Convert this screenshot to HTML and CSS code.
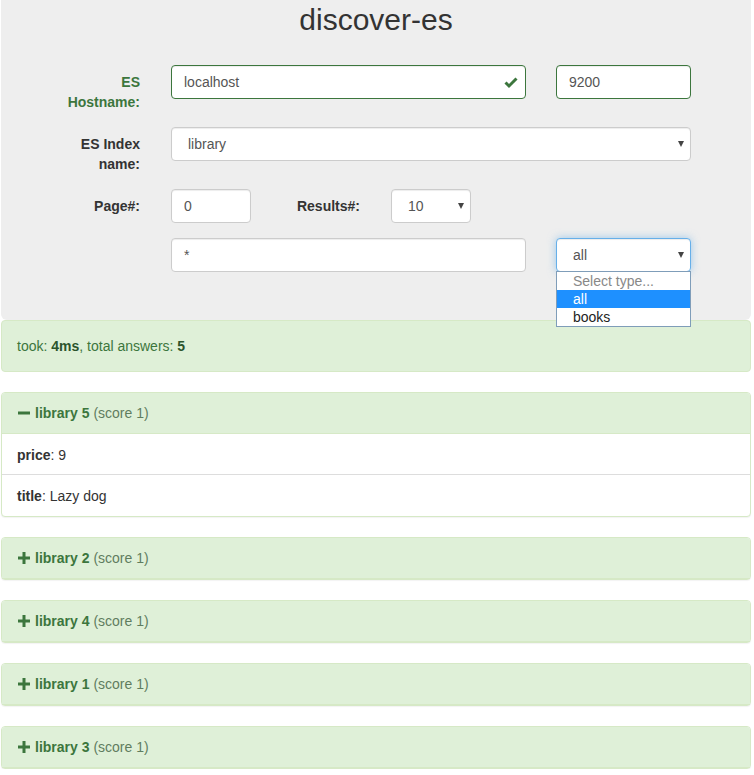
FILE: index.html
```html
<!DOCTYPE html>
<html lang="en">
<head>
<meta charset="utf-8">
<title>discover-es</title>
<link rel="stylesheet" href="styles.css">
</head>
<body>
<div class="page">
  <div class="jumbotron">
    <h2 class="title">discover-es</h2>
    <form class="form">
      <div class="row row-tall">
        <label class="lbl lbl-success">ES Hostname:</label>
        <div class="field w-host">
          <input class="input input-success" value="localhost">
          <svg class="check" width="14" height="12" viewBox="0 0 14 12"><polyline points="1.5,5.5 5,9 12.5,1.5" fill="none" stroke="#3c763d" stroke-width="3"/></svg>
        </div>
        <div class="field w-port gap30">
          <input class="input input-success" value="9200">
        </div>
      </div>
      <div class="row row-tall">
        <label class="lbl">ES Index name:</label>
        <div class="field w-full select-wrap">
          <select class="select"><option>library</option></select>
        </div>
      </div>
      <div class="row">
        <label class="lbl">Page#:</label>
        <div class="field w-small">
          <input class="input" value="0">
        </div>
        <label class="lbl lbl-results">Results#:</label>
        <div class="field w-small select-wrap">
          <select class="select"><option>10</option></select>
        </div>
      </div>
      <div class="row row-last">
        <div class="spacer"></div>
        <div class="field w-host">
          <input class="input" value="*">
        </div>
        <div class="field w-port gap30 select-wrap">
          <select class="select select-focus"><option>all</option></select>
          <ul class="dropdown">
            <li class="opt opt-muted">Select type...</li>
            <li class="opt opt-active">all</li>
            <li class="opt">books</li>
          </ul>
        </div>
      </div>
    </form>
  </div>

  <div class="alert">took: <b>4ms</b>, total answers: <b>5</b></div>

  <div class="panel">
    <div class="panel-heading">
      <svg class="pm" width="12" height="12" viewBox="0 0 12 12"><rect x="0" y="4.5" width="12" height="3" fill="#3c763d"/></svg>
      <span class="ptitle"><b>library 5</b> <span class="score">(score 1)</span></span>
    </div>
    <div class="item"><b>price</b>: 9</div>
    <div class="item item-last"><b>title</b>: Lazy dog</div>
  </div>

  <div class="panel">
    <div class="panel-heading">
      <svg class="pm" width="12" height="12" viewBox="0 0 12 12"><rect x="0" y="4.5" width="12" height="3" fill="#3c763d"/><rect x="4.5" y="0" width="3" height="12" fill="#3c763d"/></svg>
      <span class="ptitle"><b>library 2</b> <span class="score">(score 1)</span></span>
    </div>
  </div>

  <div class="panel">
    <div class="panel-heading">
      <svg class="pm" width="12" height="12" viewBox="0 0 12 12"><rect x="0" y="4.5" width="12" height="3" fill="#3c763d"/><rect x="4.5" y="0" width="3" height="12" fill="#3c763d"/></svg>
      <span class="ptitle"><b>library 4</b> <span class="score">(score 1)</span></span>
    </div>
  </div>

  <div class="panel">
    <div class="panel-heading">
      <svg class="pm" width="12" height="12" viewBox="0 0 12 12"><rect x="0" y="4.5" width="12" height="3" fill="#3c763d"/><rect x="4.5" y="0" width="3" height="12" fill="#3c763d"/></svg>
      <span class="ptitle"><b>library 1</b> <span class="score">(score 1)</span></span>
    </div>
  </div>

  <div class="panel panel-last">
    <div class="panel-heading">
      <svg class="pm" width="12" height="12" viewBox="0 0 12 12"><rect x="0" y="4.5" width="12" height="3" fill="#3c763d"/><rect x="4.5" y="0" width="3" height="12" fill="#3c763d"/></svg>
      <span class="ptitle"><b>library 3</b> <span class="score">(score 1)</span></span>
    </div>
  </div>
</div>
</body>
</html>
```
FILE: styles.css
```css
html, body {
  margin: 0;
  padding: 0;
  background: #fff;
}
body {
  font-family: "Liberation Sans", Arial, Helvetica, sans-serif;
  font-size: 14px;
  line-height: 20px;
  color: #333;
}
.page {
  width: 750px;
  margin-left: 1px;
}
.jumbotron {
  background: #eee;
  border-radius: 0 0 6px 6px;
  padding: 0 0 48px 59px;
}
.title {
  margin: 0 0 25px -59px;
  font-size: 30px;
  line-height: 40px;
  font-weight: normal;
  text-align: center;
  color: #333;
}
.form {
  margin: 0;
}
.row {
  display: flex;
  align-items: flex-start;
  margin-bottom: 15px;
}
.row-last {
  margin-bottom: 0;
}
.lbl {
  width: 80px;
  flex: none;
  padding-top: 7px;
  text-align: right;
  font-weight: bold;
  color: #333;
}
.lbl-success {
  color: #3c763d;
}
.lbl-results {
  width: 94px;
  margin-left: 15px;
}
.spacer {
  width: 80px;
  flex: none;
}
.field {
  position: relative;
  flex: none;
  margin-left: 31px;
}
.gap30 {
  margin-left: 30px;
}
.w-host { width: 355px; }
.w-port { width: 135px; }
.w-full { width: 520px; }
.w-small { width: 80px; }
.input, .select {
  display: block;
  box-sizing: border-box;
  width: 100%;
  height: 34px;
  margin: 0;
  padding: 6px 12px;
  font-family: inherit;
  font-size: 14px;
  line-height: 20px;
  color: #555;
  background: #fff;
  border: 1px solid #ccc;
  border-radius: 4px;
  box-shadow: inset 0 1px 1px rgba(0,0,0,.075);
  outline: none;
}
.input-success {
  border-color: #3c763d;
}
.select {
  -webkit-appearance: none;
  appearance: none;
  padding-left: 16px;
}
.select-focus {
  border-color: #66afe9;
  box-shadow: inset 0 1px 1px rgba(0,0,0,.075), 0 0 8px rgba(102,175,233,.6);
}
.select-wrap::after {
  content: "";
  position: absolute;
  right: 7px;
  top: 14px;
  border-left: 3.5px solid transparent;
  border-right: 3.5px solid transparent;
  border-top: 6px solid #444;
  pointer-events: none;
}
.check {
  position: absolute;
  right: 8px;
  top: 12px;
}
.dropdown {
  position: absolute;
  left: 0;
  top: 33px;
  width: 135px;
  box-sizing: border-box;
  margin: 0;
  padding: 0;
  list-style: none;
  background: #fff;
  border: 1px solid #7f9db9;
  z-index: 5;
}
.opt {
  height: 18px;
  line-height: 18px;
  padding-left: 16px;
  color: #222;
  font-size: 14px;
}
.opt-muted {
  color: #888;
}
.opt-active {
  background: #1e90ff;
  color: #fff;
}
.alert {
  padding: 15px;
  margin-bottom: 20px;
  background: #dff0d8;
  border: 1px solid #d6e9c6;
  border-radius: 4px;
  color: #3c763d;
}
.alert b {
  color: #2b542c;
}
.panel {
  margin-bottom: 20px;
  background: #fff;
  border: 1px solid #d6e9c6;
  border-radius: 4px;
  box-shadow: 0 1px 1px rgba(0,0,0,.05);
}
.panel-last {
  margin-bottom: 0;
}
.panel-heading {
  display: flex;
  align-items: center;
  padding: 10px 15px;
  background: #dff0d8;
  border-bottom: 1px solid #d6e9c6;
  border-radius: 3px 3px 0 0;
  color: #3c763d;
}
.pm {
  flex: none;
  margin: 0 5px 0 1px;
}
.score {
  color: #5f7d5f;
}
.item {
  padding: 11px 15px 9px;
  border-bottom: 1px solid #ddd;
  color: #333;
}
.item-last {
  border-bottom: 0;
  padding-bottom: 10px;
}
```
